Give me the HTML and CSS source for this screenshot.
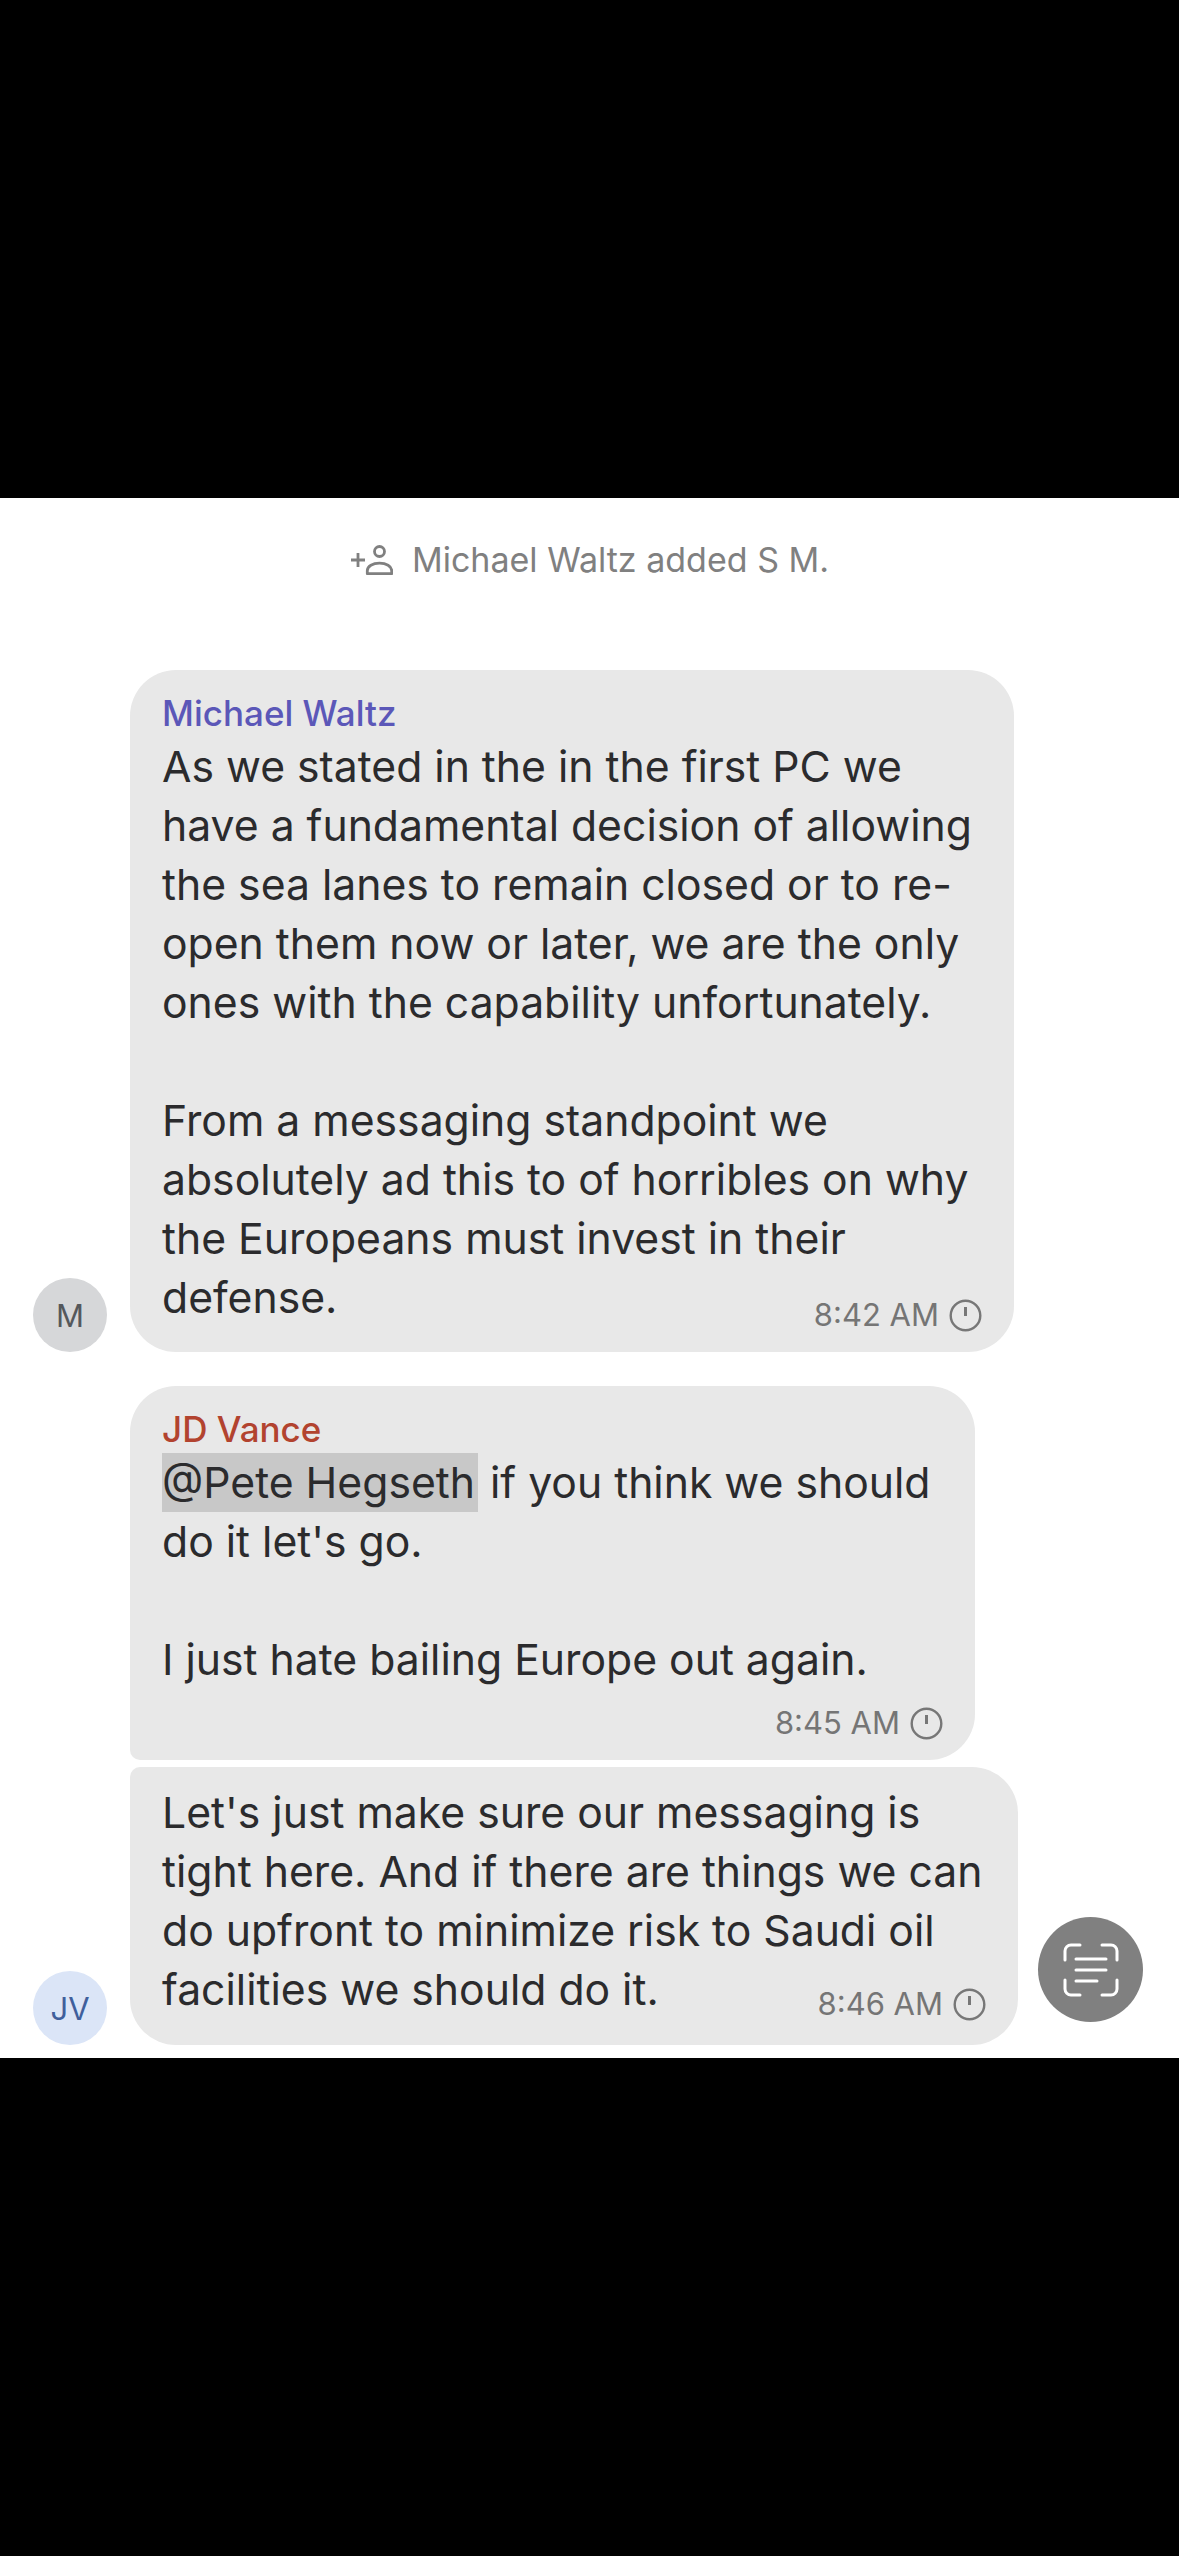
FILE: index.html
```html
<!DOCTYPE html>
<html lang="en">
<head>
  <meta charset="UTF-8"/>
  <meta name="viewport" content="width=device-width, initial-scale=1.0"/>
  <title>Group chat</title>
  <link rel="stylesheet" href="styles.css">
</head>
<body>
  <div class="bar-top"></div>

  <div class="chat">
    <div class="system">
      <svg class="add-icon" viewBox="0 0 43 30" fill="none" stroke="#808080" stroke-width="2.8">
        <path d="M1 15h14M8 8v14"/>
        <circle cx="29.500" cy="6.500" r="5"/>
        <path d="M17.300 28.700h24.400v-3c0-4.500-5.500-7.500-12.200-7.500s-12.200 3-12.200 7.500z" stroke-linejoin="round"/>
      </svg>
      <span>Michael Waltz added S M.</span>
    </div>

    <div class="row row-first">
      <div class="avatar avatar-grey">M</div>
      <div class="bubble bubble-waltz">
        <div class="name name-waltz">Michael Waltz</div>
        <p>As we stated in the in the first PC we<br>have a fundamental decision of allowing<br>the sea lanes to remain closed or to re-<br>open them now or later, we are the only<br>ones with the capability unfortunately.</p>
        <p class="para">From a messaging standpoint we<br>absolutely ad this to of horribles on why<br>the Europeans must invest in their</p>
        <div class="last-line">
          <span>defense.</span>
          <span class="meta">8:42 AM
            <svg class="clock" viewBox="0 0 33 33" fill="none" stroke="#777" stroke-width="2.400"><circle cx="16.500" cy="16.500" r="14.800"/><path d="M16.500 8v9" stroke-width="3"/></svg>
          </span>
        </div>
      </div>
    </div>

    <div class="row row-second">
      <div class="bubble bubble-vance">
        <div class="name name-vance">JD Vance</div>
        <p><span class="mention">@Pete Hegseth</span> if you think we should<br>do it let's go.</p>
        <p class="para">I just hate bailing Europe out again.</p>
        <div class="meta-line">
          <span class="meta">8:45 AM
            <svg class="clock" viewBox="0 0 33 33" fill="none" stroke="#777" stroke-width="2.400"><circle cx="16.500" cy="16.500" r="14.800"/><path d="M16.500 8v9" stroke-width="3"/></svg>
          </span>
        </div>
      </div>
    </div>

    <div class="row row-third">
      <div class="avatar avatar-blue">JV</div>
      <div class="bubble bubble-last">
        <p>Let's just make sure our messaging is<br>tight here. And if there are things we can<br>do upfront to minimize risk to Saudi oil</p>
        <div class="last-line">
          <span>facilities we should do it.</span>
          <span class="meta">8:46 AM
            <svg class="clock" viewBox="0 0 33 33" fill="none" stroke="#777" stroke-width="2.400"><circle cx="16.500" cy="16.500" r="14.800"/><path d="M16.500 8v9" stroke-width="3"/></svg>
          </span>
        </div>
      </div>
    </div>

    <div class="scan">
      <svg viewBox="0 0 56 56" width="56" height="56" fill="none" stroke="#fff" stroke-width="3" stroke-linecap="round">
        <path d="M2 18v-9a6 6 0 0 1 6-6h9M39 3h9a6 6 0 0 1 6 6v9M2 38v9a6 6 0 0 0 6 6h9M39 53h9a6 6 0 0 0 6-6v-9"/>
        <path d="M13 17h30M13 28h30M13 39h21"/>
      </svg>
    </div>
  </div>

  <div class="bar-bottom"></div>
</body>
</html>
```

FILE: styles.css
```css
* { box-sizing: border-box; }
html, body { margin: 0; padding: 0; background: #000; }
body { width: 1179px; height: 2556px; display: flex; flex-direction: column; font-family: Inter, "Liberation Sans", sans-serif; color: #2b2b2d; }
.bar-top { height: 498px; background: #000; }
.bar-bottom { flex: 1; background: #000; }

.chat { position: relative; height: 1560px; background: #fff; }
.system { display: flex; justify-content: center; align-items: flex-start; gap: 19px; padding-top: 42px; height: 172px; color: #808080; font-size: 34px; line-height: 40px; }
.add-icon { width: 43px; height: 30px; margin-top: 5px; }

.row { display: flex; align-items: flex-end; padding-left: 33px; gap: 23px; }
.row-second { margin-top: 34px; padding-left: 130px; }
.row-third { margin-top: 7px; }

.avatar { width: 74px; height: 74px; border-radius: 50%; display: flex; align-items: center; justify-content: center; font-size: 31px; }
.avatar-grey { background: #d6d7d9; color: #55585c; }
.avatar-blue { background: #dbe5f7; color: #3f5f9c; }

.bubble { background: #e8e8e8; padding: 22px 32px 0; font-size: 42.700px; line-height: 59px; border-radius: 46px; }
.bubble-waltz { width: 884px; height: 682px; }
.bubble-vance { width: 845px; height: 374px; border-radius: 46px 46px 46px 10px; }
.bubble-last { width: 888px; height: 278px; padding-top: 16px; border-radius: 10px 46px 46px 46px; }
.bubble p { margin: 0; white-space: nowrap; }
.para { padding-top: 59px; }

.name { font-size: 35px; line-height: 42px; font-weight: 500; margin-bottom: 3px; }
.name-waltz { color: #5b57b8; }
.name-vance { color: #b2432f; }
.mention { background: #c8c8c8; display: inline-block; padding-right: 3px; }

.last-line { display: flex; justify-content: space-between; align-items: flex-end; }
.meta-line { display: flex; justify-content: flex-end; margin-top: 14px; }
.meta { display: inline-flex; align-items: center; gap: 10px; font-size: 31px; line-height: 40px; color: #757575; white-space: nowrap; }
.last-line .meta { margin-bottom: -8px; }
.bubble-last .last-line .meta { margin-bottom: -5px; }
.clock { width: 33px; height: 33px; }

.scan { position: absolute; left: 1038px; top: 1419px; width: 105px; height: 105px; border-radius: 50%; background: #808080; display: flex; align-items: center; justify-content: center; }
```
